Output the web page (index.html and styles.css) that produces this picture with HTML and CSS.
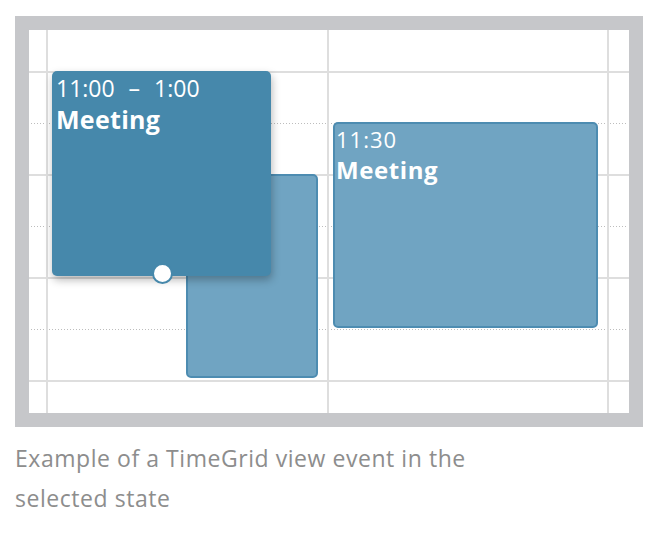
FILE: index.html
```html
<!DOCTYPE html>
<html>
<head>
<meta charset="utf-8">
<link rel="stylesheet" href="styles.css">
</head>
<body>
<figure class="figure">
  <div class="frame">
    <div class="canvas">
      <div class="rows">
        <div class="row row-top"></div>
        <div class="row half"></div>
        <div class="row full"></div>
        <div class="row half"></div>
        <div class="row full"></div>
        <div class="row half"></div>
        <div class="row full"></div>
        <div class="row row-end"></div>
      </div>
      <div class="cols">
        <div class="col col-axis"></div>
        <div class="col col-day"></div>
        <div class="col col-day"></div>
        <div class="col col-end"></div>
      </div>
      <div class="event event-back"></div>
      <div class="event event-side">
        <div class="ev-time">11:30</div>
        <div class="ev-title">Meeting</div>
      </div>
      <div class="event event-selected">
        <div class="ev-time">11:00 – 1:00</div>
        <div class="ev-title">Meeting</div>
        <span class="handle"></span>
      </div>
    </div>
  </div>
  <figcaption class="caption">Example of a TimeGrid view event in the selected state</figcaption>
</figure>
</body>
</html>
```

FILE: styles.css
```css
html, body {
  margin: 0;
  padding: 0;
  background: #ffffff;
}

.figure {
  margin: 0;
  padding: 16px 16px 0 15px;
}

.frame {
  width: 628px;
  height: 411px;
  box-sizing: border-box;
  border: 14px solid #c6c7ca;
  background: #ffffff;
}

.canvas {
  position: relative;
  width: 600px;
  height: 383px;
  overflow: hidden;
}

.rows {
  display: flex;
  flex-direction: column;
}

.row {
  box-sizing: content-box;
}

.row-top {
  height: 41px;
  border-bottom: 2px solid #dedede;
}

.half {
  height: 50px;
  padding-bottom: 1px;
  margin: 0 2px;
  background-image: repeating-linear-gradient(to right, #bdbdbd 0 1px, transparent 1px 3px);
  background-size: 100% 1px;
  background-position: left bottom;
  background-repeat: no-repeat;
}

.full {
  height: 50px;
  border-bottom: 2px solid #dedede;
}

.row-end {
  height: 40px;
}

.cols {
  position: absolute;
  inset: 0;
  display: flex;
}

.col {
  height: 100%;
}

.col-axis {
  width: 17px;
  border-right: 2px solid #dedede;
}

.col-day {
  width: 279px;
  border-right: 2px solid #dedede;
}

.col-day + .col-day {
  width: 278px;
}

.col-end {
  flex: 1;
}

.event {
  position: absolute;
  box-sizing: border-box;
  border-radius: 5px;
  color: #ffffff;
  font-family: "Open Sans", "DejaVu Sans", sans-serif;
  padding: 3px 0 0 4px;
}

.event-back {
  left: 157px;
  top: 144px;
  width: 132px;
  height: 204px;
  background: #70a4c2;
  border: 2px solid #4d8cb1;
}

.event-side {
  left: 304px;
  top: 92px;
  width: 265px;
  height: 206px;
  background: #70a4c2;
  border: 2px solid #4d8cb1;
  padding: 1px 0 0 1px;
}

.event-selected {
  left: 23px;
  top: 41px;
  width: 219px;
  height: 205px;
  background: #4688ab;
  box-shadow: 1px 4px 9px rgba(0, 0, 0, 0.28);
}

.ev-time {
  font-size: 23px;
  font-weight: 500;
  line-height: 28px;
  word-spacing: 8px;
  white-space: nowrap;
}

.ev-title {
  font-size: 25px;
  font-weight: 700;
  line-height: 34px;
  letter-spacing: 0.3px;
}

.event-side .ev-time {
  font-size: 22px;
  letter-spacing: 1px;
}

.event-side .ev-title {
  font-size: 24px;
  letter-spacing: 0.6px;
}

.handle {
  position: absolute;
  left: 50%;
  bottom: -8px;
  width: 21px;
  height: 21px;
  box-sizing: border-box;
  margin-left: -10px;
  border-radius: 50%;
  background: #ffffff;
  border: 2px solid #4688ab;
}

.caption {
  margin: 11px 0 0 0;
  width: 500px;
  font-family: "Open Sans", Lato, sans-serif;
  font-size: 23px;
  line-height: 40px;
  letter-spacing: 0.55px;
  color: #8d8d8d;
}
```
